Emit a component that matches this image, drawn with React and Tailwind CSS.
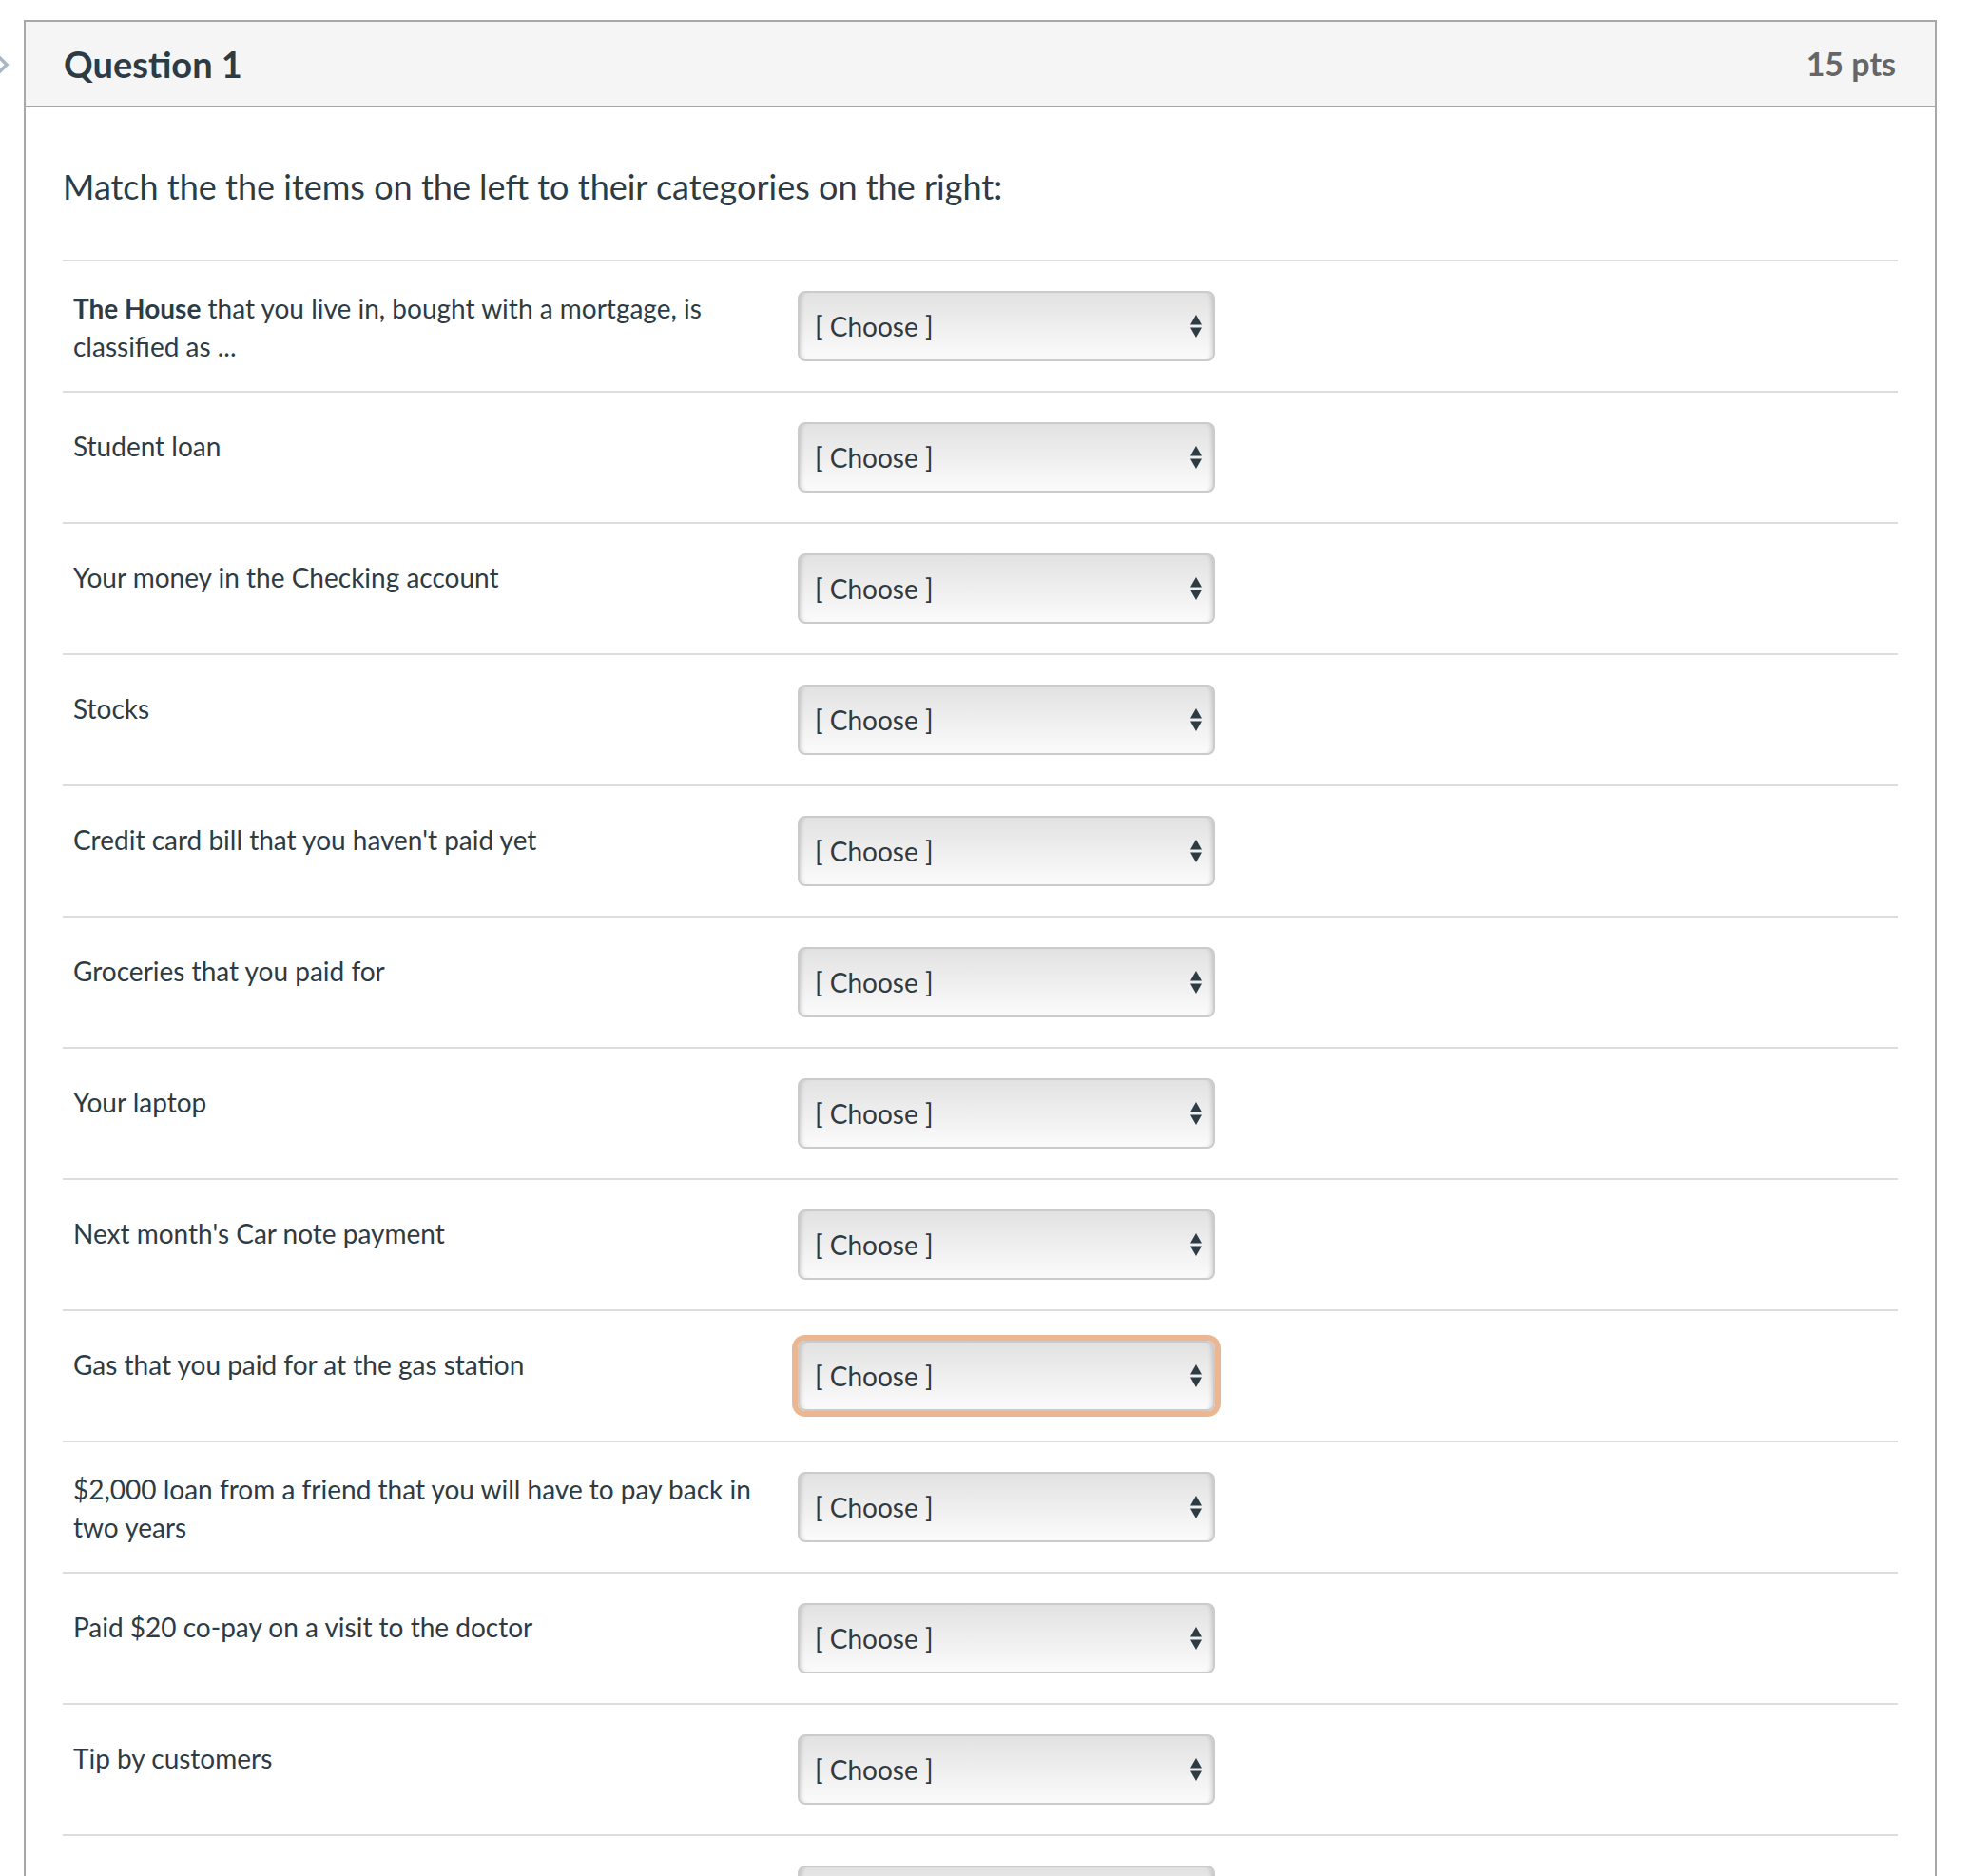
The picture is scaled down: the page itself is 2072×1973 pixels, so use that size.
import React from "react";

const items = [
  { bold: "The House", rest: " that you live in, bought with a mortgage, is classified as ...", two: true },
  { rest: "Student loan" },
  { rest: "Your money in the Checking account" },
  { rest: "Stocks" },
  { rest: "Credit card bill that you haven't paid yet" },
  { rest: "Groceries that you paid for" },
  { rest: "Your laptop" },
  { rest: "Next month's Car note payment" },
  { rest: "Gas that you paid for at the gas station", focused: true },
  { rest: "$2,000 loan from a friend that you will have to pay back in two years", two: true },
  { rest: "Paid $20 co-pay on a visit to the doctor" },
  { rest: "Tip by customers" },
  { rest: "" },
];

function Arrows() {
  return (
    <svg width="14" height="26" viewBox="0 0 14 26" className="shrink-0">
      <path d="M7 1 L13 11.5 L1 11.5 Z" fill="#2d3b45" />
      <path d="M7 25 L13 14.5 L1 14.5 Z" fill="#2d3b45" />
    </svg>
  );
}

function Select({ focused }) {
  return (
    <div
      className={
        "w-[439px] h-[74px] shrink-0 flex items-center justify-between pl-[16px] pr-[11px] rounded-[8px] border-2 border-[#cbcbcb] bg-linear-to-b from-[#e2e2e2] to-[#fbfbfb] " +
        (focused
          ? "shadow-[0_0_0_6px_#ebb793,inset_5px_0_5px_-4px_rgba(0,0,0,0.18),inset_-5px_0_5px_-4px_rgba(0,0,0,0.18)]"
          : "shadow-[inset_5px_0_5px_-4px_rgba(0,0,0,0.18),inset_-5px_0_5px_-4px_rgba(0,0,0,0.18)]")
      }
    >
      <span className="text-[28px] leading-none text-[#2d3b45]">[ Choose ]</span>
      <Arrows />
    </div>
  );
}

export default function App() {
  return (
    <div
      className="relative bg-white min-h-[1973px] pt-[21px] overflow-hidden"
      style={{ fontFamily: "Lato, 'Open Sans', 'Liberation Sans', sans-serif" }}
    >
      <svg className="absolute left-0 top-[53px]" width="10" height="30" viewBox="0 0 10 30">
        <path d="M-6 2 L7 15 L-6 28" fill="none" stroke="#a9b7c5" strokeWidth="3.5" />
      </svg>
      <div className="ml-[25px] w-[2012px] border-2 border-[#a8a8a8] border-b-0 min-h-[1960px]">
        <div className="h-[90px] bg-[#f5f5f5] border-b-2 border-[#a8a8a8] flex items-center justify-between pl-[40px] pr-[41px]">
          <div className="text-[38px] font-bold text-[#2d3b45] leading-none">Question 1</div>
          <div className="text-[34px] font-bold text-[#666666] leading-none">15 pts</div>
        </div>
        <div className="px-[39px] pt-[58px]">
          <p className="text-[36px] leading-[1.4] text-[#2d3b45] mb-[52px]">
            Match the the items on the left to their categories on the right:
          </p>
          <div>
            {items.map((it, i) => (
              <div key={i} className="flex items-start h-[138px] border-t-2 border-[#dddddd] pt-[31px]">
                <div
                  className={
                    "w-[773px] shrink-0 pl-[11px] pr-[24px] text-[28px] leading-[40px] text-[#2d3b45] " +
                    (it.two ? "-mt-[2px]" : "mt-[5px]")
                  }
                >
                  {it.bold && <span className="font-bold">{it.bold}</span>}
                  {it.rest}
                </div>
                <Select focused={it.focused} />
              </div>
            ))}
          </div>
        </div>
      </div>
    </div>
  );
}
